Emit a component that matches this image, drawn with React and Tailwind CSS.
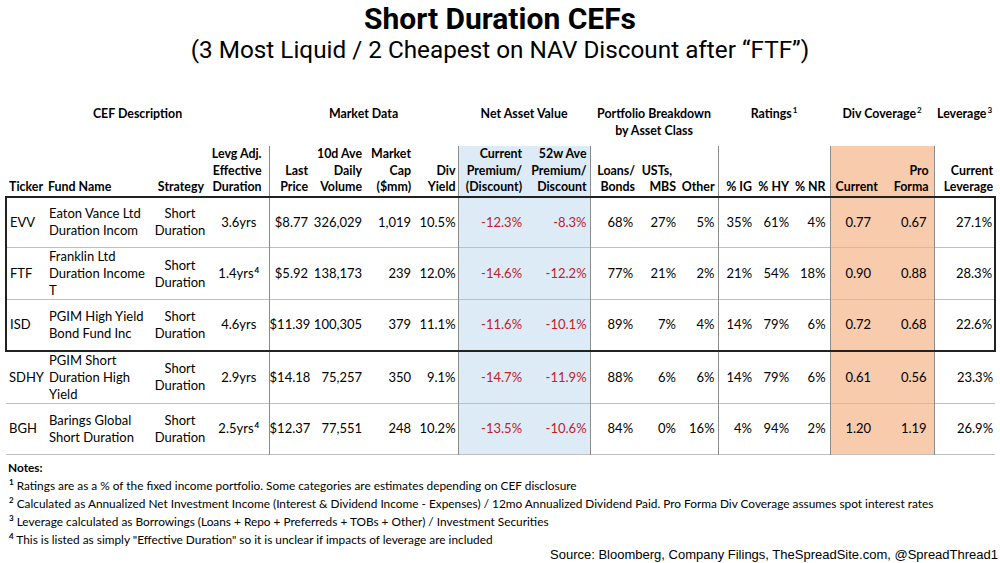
import React from "react";

const rows = [
  { t: "EVV", name: ["Eaton Vance Ltd", "Duration Incom"], dur: "3.6yrs", sup: false, price: "$8.77", vol: "326,029", cap: "1,019", yld: "10.5%", cur: "-12.3%", avg: "-8.3%", loans: "68%", usts: "27%", other: "5%", ig: "35%", hy: "61%", nr: "4%", dc: "0.77", pf: "0.67", lev: "27.1%" },
  { t: "FTF", name: ["Franklin Ltd", "Duration Income", "T"], dur: "1.4yrs", sup: true, price: "$5.92", vol: "138,173", cap: "239", yld: "12.0%", cur: "-14.6%", avg: "-12.2%", loans: "77%", usts: "21%", other: "2%", ig: "21%", hy: "54%", nr: "18%", dc: "0.90", pf: "0.88", lev: "28.3%" },
  { t: "ISD", name: ["PGIM High Yield", "Bond Fund Inc"], dur: "4.6yrs", sup: false, price: "$11.39", vol: "100,305", cap: "379", yld: "11.1%", cur: "-11.6%", avg: "-10.1%", loans: "89%", usts: "7%", other: "4%", ig: "14%", hy: "79%", nr: "6%", dc: "0.72", pf: "0.68", lev: "22.6%" },
  { t: "SDHY", name: ["PGIM Short", "Duration High", "Yield"], dur: "2.9yrs", sup: false, price: "$14.18", vol: "75,257", cap: "350", yld: "9.1%", cur: "-14.7%", avg: "-11.9%", loans: "88%", usts: "6%", other: "6%", ig: "14%", hy: "79%", nr: "6%", dc: "0.61", pf: "0.56", lev: "23.3%" },
  { t: "BGH", name: ["Barings Global", "Short Duration"], dur: "2.5yrs", sup: true, price: "$12.37", vol: "77,551", cap: "248", yld: "10.2%", cur: "-13.5%", avg: "-10.6%", loans: "84%", usts: "0%", other: "16%", ig: "4%", hy: "94%", nr: "2%", dc: "1.20", pf: "1.19", lev: "26.9%" },
];

const VL = "border-l border-l-[#8c8c8c]";
const BLUE = "bg-[#ddebf7]";
const ORANGE = "bg-[#f8cbad]";
const RED = "text-[#c0202a]";

function Sup({ children }) {
  return <span className="text-[8px] font-bold relative -top-[5px] ml-[1px] leading-none">{children}</span>;
}

function Row({ r }) {
  return (
    <tr className="h-[51px] border-b border-b-[#bfbfbf]">
      <td className="pl-[3px] align-middle">{r.t}</td>
      <td className="pl-[6px] align-middle whitespace-nowrap">
        {r.name.map((n, i) => (
          <div key={i}>{n}</div>
        ))}
      </td>
      <td className="text-center align-middle">
        <div>Short</div>
        <div>Duration</div>
      </td>
      <td className="text-center align-middle whitespace-nowrap">
        {r.dur}
        {r.sup && <Sup>4</Sup>}
      </td>
      <td className={`text-right pr-[4px] ${VL}`}>{r.price}</td>
      <td className="text-right pr-[5px]">{r.vol}</td>
      <td className="text-right pr-[4px]">{r.cap}</td>
      <td className="text-right pr-[2px]">{r.yld}</td>
      <td className={`text-right pr-[2px] ${VL} ${BLUE} ${RED}`}>{r.cur}</td>
      <td className={`text-right pr-[3px] ${BLUE} ${RED}`}>{r.avg}</td>
      <td className={`text-right pr-[5px] ${VL}`}>{r.loans}</td>
      <td className="text-right pr-[2px]">{r.usts}</td>
      <td className="text-right pr-[3px]">{r.other}</td>
      <td className={`text-right pr-[4px] ${VL}`}>{r.ig}</td>
      <td className="text-right pr-[3px]">{r.hy}</td>
      <td className="text-right pr-[4px]">{r.nr}</td>
      <td className={`text-center pl-[4px] ${VL} ${ORANGE}`}>{r.dc}</td>
      <td className={`text-right pr-[7px] ${ORANGE}`}>{r.pf}</td>
      <td className={`text-right pr-[2px] ${VL}`}>{r.lev}</td>
    </tr>
  );
}

const TH = "align-bottom font-bold pb-0";

export default function App() {
  return (
    <div className="w-[1000px] h-[563px] bg-white overflow-hidden text-black font-['Lato',sans-serif]">
      <div className="text-center pt-[2px]">
        <div className="font-['Roboto',sans-serif] font-bold text-[30px] leading-[34px]">Short Duration CEFs</div>
        <div className="font-['Roboto',sans-serif] text-[24.3px] leading-[28px]">(3 Most Liquid / 2 Cheapest on NAV Discount after “FTF”)</div>
      </div>

      <table className="table-fixed border-collapse ml-[5px] mt-[39px] w-[989px] text-[13px] leading-[17px]">
        <colgroup>
          <col className="w-[37px]" />
          <col className="w-[108px]" />
          <col className="w-[58px]" />
          <col className="w-[60px]" />
          <col className="w-[43px]" />
          <col className="w-[55px]" />
          <col className="w-[48px]" />
          <col className="w-[43px]" />
          <col className="w-[66px]" />
          <col className="w-[66px]" />
          <col className="w-[48px]" />
          <col className="w-[40px]" />
          <col className="w-[40px]" />
          <col className="w-[38px]" />
          <col className="w-[36px]" />
          <col className="w-[38px]" />
          <col className="w-[52px]" />
          <col className="w-[52px]" />
          <col className="w-[61px]" />
        </colgroup>
        <thead className="font-bold text-[12.4px]">
          <tr className="h-[43px]">
            <th colSpan={4} className="align-top text-center font-bold pt-[2px]">CEF Description</th>
            <th colSpan={4} className="align-top text-center font-bold pt-[2px]">Market Data</th>
            <th colSpan={2} className="align-top text-center font-bold pt-[2px]">Net Asset Value</th>
            <th colSpan={3} className="align-top text-center font-bold pt-[2px]">
              Portfolio Breakdown
              <br />
              by Asset Class
            </th>
            <th colSpan={3} className="align-top text-center font-bold pt-[2px]">
              Ratings<Sup>1</Sup>
            </th>
            <th colSpan={2} className="align-top text-center font-bold pt-[2px] whitespace-nowrap">
              Div Coverage<Sup>2</Sup>
            </th>
            <th className="align-top text-center font-bold pt-[2px] whitespace-nowrap">
              Leverage<Sup>3</Sup>
            </th>
          </tr>
          <tr className="h-[50px] leading-[16.5px]">
            <th className={`${TH} text-left pl-[3px]`}>Ticker</th>
            <th className={`${TH} text-left pl-[5px]`}>Fund Name</th>
            <th className={`${TH} text-right pr-[5px]`}>Strategy</th>
            <th className={`${TH} text-right pr-[7px] whitespace-nowrap`}>
              Levg Adj.
              <br />
              Effective
              <br />
              Duration
            </th>
            <th className={`${TH} text-right pr-[4px] ${VL}`}>
              Last
              <br />
              Price
            </th>
            <th className={`${TH} text-right pr-[5px] whitespace-nowrap`}>
              10d Ave
              <br />
              Daily
              <br />
              Volume
            </th>
            <th className={`${TH} text-right pr-[4px]`}>
              Market
              <br />
              Cap
              <br />
              ($mm)
            </th>
            <th className={`${TH} text-right pr-[2px]`}>
              Div
              <br />
              Yield
            </th>
            <th className={`${TH} text-right pr-[2px] ${VL} ${BLUE}`}>
              Current
              <br />
              Premium/
              <br />
              (Discount)
            </th>
            <th className={`${TH} text-right pr-[3px] ${BLUE}`}>
              52w Ave
              <br />
              Premium/
              <br />
              Discount
            </th>
            <th className={`${TH} text-right pr-[3px] ${VL}`}>
              Loans/
              <br />
              Bonds
            </th>
            <th className={`${TH} text-right pr-[2px]`}>
              <div className="pr-[4px]">USTs,</div>
              <div>MBS</div>
            </th>
            <th className={`${TH} text-right pr-[3px]`}>Other</th>
            <th className={`${TH} text-right pr-[4px] whitespace-nowrap ${VL}`}>% IG</th>
            <th className={`${TH} text-right pr-[3px] whitespace-nowrap`}>% HY</th>
            <th className={`${TH} text-right pr-[4px] whitespace-nowrap`}>% NR</th>
            <th className={`${TH} text-left pl-[5px] ${VL} ${ORANGE}`}>Current</th>
            <th className={`${TH} text-right pr-[5px] ${ORANGE}`}>
              Pro
              <br />
              Forma
            </th>
            <th className={`${TH} text-right pr-[2px] ${VL}`}>
              Current
              <br />
              Leverage
            </th>
          </tr>
        </thead>
        <tbody className="border-2 border-[#222]">
          {rows.slice(0, 3).map((r) => (
            <Row key={r.t} r={r} />
          ))}
        </tbody>
        <tbody>
          {rows.slice(3).map((r) => (
            <Row key={r.t} r={r} />
          ))}
        </tbody>
      </table>

      <div>
        <div className="pl-[8px] pt-[4px] text-[11.85px] leading-[18px]">
          <div className="font-bold">Notes:</div>
          <div>
            <Sup>1</Sup> Ratings are as a % of the fixed income portfolio. Some categories are estimates depending on CEF disclosure
          </div>
          <div>
            <Sup>2</Sup> Calculated as Annualized Net Investment Income (Interest &amp; Dividend Income - Expenses) / 12mo Annualized Dividend Paid. Pro Forma Div Coverage assumes spot interest rates
          </div>
          <div>
            <Sup>3</Sup> Leverage calculated as Borrowings (Loans + Repo + Preferreds + TOBs + Other) / Investment Securities
          </div>
          <div>
            <Sup>4</Sup> This is listed as simply "Effective Duration" so it is unclear if impacts of leverage are included
          </div>
        </div>
        <div className="text-right pr-[2px] font-['Liberation_Sans',sans-serif] text-[13px] leading-[16px] -mt-[2px]">
          Source: Bloomberg, Company Filings, TheSpreadSite.com, @SpreadThread1
        </div>
      </div>
    </div>
  );
}
